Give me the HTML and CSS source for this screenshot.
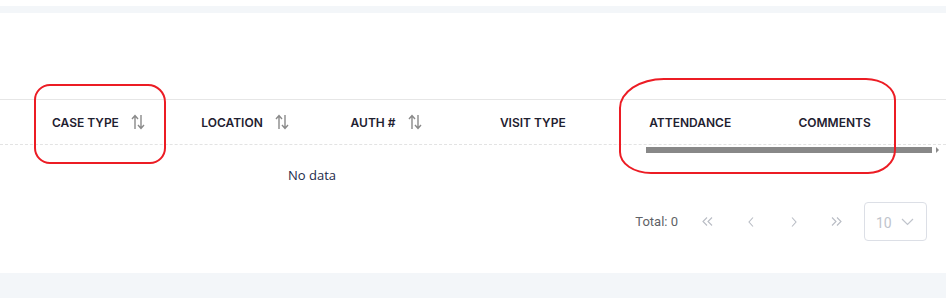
FILE: index.html
```html
<!DOCTYPE html>
<html>
<head>
<meta charset="utf-8">
<link rel="stylesheet" href="styles.css">
</head>
<body>
<div class="page">
  <div class="top-white"></div>
  <div class="band band-top"></div>
  <div class="card">
    <div class="table">
      <div class="thead">
        <div class="th">CASE TYPE <svg class="sort" width="14" height="16" viewBox="0 0 14 16"><path d="M4 15V2M1 5l3-3.5L7 5" fill="none" stroke="#8a8a8a" stroke-width="1.4"/><path d="M10 1v13M7 11l3 3.5 3-3.5" fill="none" stroke="#8a8a8a" stroke-width="1.4"/></svg></div>
        <div class="th">LOCATION <svg class="sort" width="14" height="16" viewBox="0 0 14 16"><path d="M4 15V2M1 5l3-3.5L7 5" fill="none" stroke="#8a8a8a" stroke-width="1.4"/><path d="M10 1v13M7 11l3 3.5 3-3.5" fill="none" stroke="#8a8a8a" stroke-width="1.4"/></svg></div>
        <div class="th">AUTH # <svg class="sort" width="14" height="16" viewBox="0 0 14 16"><path d="M4 15V2M1 5l3-3.5L7 5" fill="none" stroke="#8a8a8a" stroke-width="1.4"/><path d="M10 1v13M7 11l3 3.5 3-3.5" fill="none" stroke="#8a8a8a" stroke-width="1.4"/></svg></div>
        <div class="th">VISIT TYPE</div>
        <div class="th">ATTENDANCE</div>
        <div class="th">COMMENTS</div>
      </div>
      <div class="scroll">
        <div class="scroll-bar"></div>
        <div class="scroll-arrow"></div>
      </div>
    </div>
    <div class="empty">No data</div>
    <div class="pagination">
      <span class="total">Total: 0</span>
      <span class="pbtn"><svg width="11" height="9" viewBox="0 0 11 9"><path d="M5 0.5L1 4.5 5 8.5M10 0.5L6 4.5 10 8.5" fill="none" stroke="#b8bcc4" stroke-width="1.1"/></svg></span>
      <span class="pbtn"><svg width="6" height="10" viewBox="0 0 6 10"><path d="M5 0.5L1 5 5 9.5" fill="none" stroke="#b8bcc4" stroke-width="1.1"/></svg></span>
      <span class="pbtn"><svg width="6" height="10" viewBox="0 0 6 10"><path d="M1 0.5L5 5 1 9.5" fill="none" stroke="#b8bcc4" stroke-width="1.1"/></svg></span>
      <span class="pbtn"><svg width="11" height="9" viewBox="0 0 11 9"><path d="M1 0.5L5 4.5 1 8.5M6 0.5L10 4.5 6 8.5" fill="none" stroke="#b8bcc4" stroke-width="1.1"/></svg></span>
      <div class="select"><span>10</span><svg width="13" height="8" viewBox="0 0 13 8"><path d="M1 1l5.5 5.5L12 1" fill="none" stroke="#c0c4cc" stroke-width="1.2"/></svg></div>
    </div>
  </div>
  <div class="band band-bottom"></div>
  <div class="mark mark-1"></div>
  <div class="mark mark-2"></div>
</div>
</body>
</html>
```
FILE: styles.css
```css
* { box-sizing: border-box; }
html, body { margin: 0; padding: 0; background: #fff; }
.page { position: relative; width: 946px; height: 298px; overflow: hidden; font-family: Roboto, "Liberation Sans", sans-serif; }
.top-white { height: 6px; background: #fff; }
.band { background: #f3f6f9; }
.band-top { height: 7px; }
.band-bottom { height: 25px; }
.card { background: #fff; height: 260px; padding-top: 86px; }
.table { border-top: 1px solid #e6e6e6; }
.thead { display: flex; height: 45px; border-bottom: 1px dashed #e3e3e3; padding-left: 36px; }
.th { width: 149.3px; padding-left: 16px; display: flex; align-items: center; font-family: Inter, Roboto, sans-serif; font-size: 12px; font-weight: 600; color: #1f2130; white-space: nowrap; }
.sort { margin-left: 12px; }
.scroll { display: flex; align-items: center; margin-top: 2px; padding-left: 646px; height: 6px; }
.scroll-bar { width: 286px; height: 6px; background: #888; }
.scroll-arrow { margin-left: 4px; width: 0; height: 0; border-top: 3px solid transparent; border-bottom: 3px solid transparent; border-left: 3px solid #8a8a8a; }
.empty { width: 624px; text-align: center; margin-top: 12px; height: 20px; line-height: 20px; font-family: "Open Sans", sans-serif; font-size: 13px; color: #1d2a4a; }
.pagination { display: flex; justify-content: flex-end; align-items: center; margin-top: 17px; padding-right: 19px; height: 39px; }
.total { font-size: 13px; color: #606266; margin-right: 8px; }
.pbtn { width: 43px; display: flex; justify-content: center; align-items: center; }
.select { margin-left: 6px; width: 63px; height: 39px; border: 1px solid #dcdfe6; border-radius: 4px; display: flex; align-items: center; justify-content: space-between; padding: 0 12px 0 11px; font-size: 14px; color: #c0c4cc; }
.select span { padding-top: 2px; }
.mark { position: absolute; border: 2.5px solid #ec1c24; }
.mark-1 { left: 34px; top: 84px; width: 132px; height: 80px; border-radius: 16px 18px 16px 16px; }
.mark-2 { left: 619px; top: 78px; width: 277px; height: 96px; border-radius: 45px 30px 28px 32px / 30px 22px 24px 22px; }
```
